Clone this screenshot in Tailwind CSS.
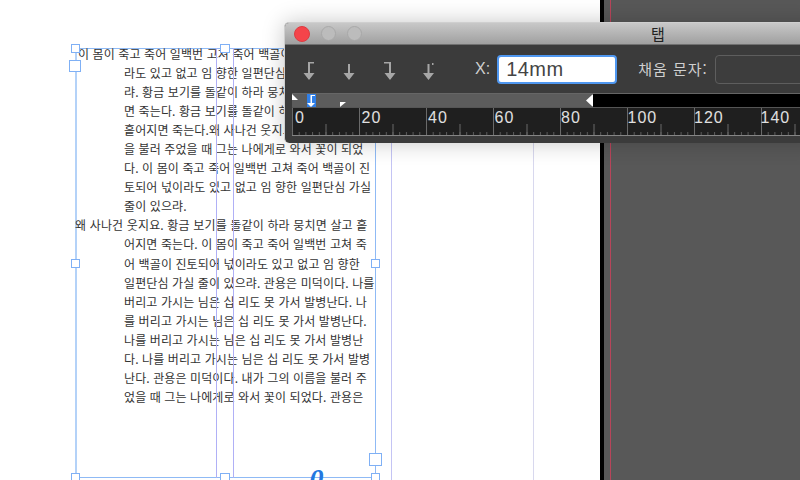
<!DOCTYPE html>
<html lang="ko">
<head>
<meta charset="UTF-8">
<title>탭</title>
<script src="https://cdn.jsdelivr.net/npm/@tailwindcss/browser@4"></script>
</head>
<body class="relative w-[800px] h-[480px] overflow-hidden bg-white [font-family:'Noto_Sans_CJK_KR',sans-serif]">

  <!-- page + pasteboard -->
  <div class="flex w-full h-full">
    <div class="w-[600px] h-full bg-white"></div>
    <div class="w-[4px] h-full bg-black"></div>
    <div class="w-[6px] h-full bg-[#585858]"></div>
    <div class="w-px h-full bg-[#b8455a]"></div>
    <div class="flex-1 h-full bg-[#585858]"></div>
  </div>

  <!-- margin guides -->
  <div class="absolute top-[48px] bottom-0 left-[391px] w-px bg-[#c4c4f4]"></div>
  <div class="absolute top-[48px] bottom-0 left-[533px] w-px bg-[#d8d8ee]"></div>

  <!-- text frame -->
  <div class="absolute left-[75px] top-[48px] w-[301px] h-[430px] border border-l-2 border-[#8fbaf5] border-l-[#b4d2f8]">
    <div class="text-[12px] leading-[19.05px] text-[#333] whitespace-nowrap tracking-[0.1px] -mt-[5px] -ml-[2px]">
      <div class="pl-[3px] w-[300px] overflow-hidden">이 몸이 죽고 죽어 일백번 고쳐 죽어 백골이 진토되어 넋이</div>
      <div class="pl-[49px]">라도 있고 없고 임 향한 일편단심 가실 줄이 있으</div>
      <div class="pl-[49px]">랴. 황금 보기를 돌같이 하라 뭉치면 살고 흩어지</div>
      <div class="pl-[49px]">면 죽는다. 황금 보기를 돌같이 하라 뭉치면 살고</div>
      <div class="pl-[49px]">흩어지면 죽는다.왜 사나건 웃지요. 내가 그의 이름</div>
      <div class="pl-[49px]">을 불러 주었을 때 그는 나에게로 와서 꽃이 되었</div>
      <div class="pl-[49px]">다. 이 몸이 죽고 죽어 일백번 고쳐 죽어 백골이 진</div>
      <div class="pl-[49px]">토되어 넋이라도 있고 없고 임 향한 일편단심 가실</div>
      <div class="pl-[49px]">줄이 있으랴.</div>
      <div class="tracking-[0.15px]">왜 사나건 웃지요. 황금 보기를 돌같이 하라 뭉치면 살고 흩</div>
      <div class="pl-[49px]">어지면 죽는다. 이 몸이 죽고 죽어 일백번 고쳐 죽</div>
      <div class="pl-[49px]">어 백골이 진토되어 넋이라도 있고 없고 임 향한</div>
      <div class="pl-[49px]">일편단심 가실 줄이 있으랴. 관용은 미덕이다. 나를</div>
      <div class="pl-[49px]">버리고 가시는 님은 십 리도 못 가서 발병난다. 나</div>
      <div class="pl-[49px]">를 버리고 가시는 님은 십 리도 못 가서 발병난다.</div>
      <div class="pl-[49px]">나를 버리고 가시는 님은 십 리도 못 가서 발병난</div>
      <div class="pl-[49px]">다. 나를 버리고 가시는 님은 십 리도 못 가서 발병</div>
      <div class="pl-[49px]">난다. 관용은 미덕이다. 내가 그의 이름을 불러 주</div>
      <div class="pl-[49px]">었을 때 그는 나에게로 와서 꽃이 되었다. 관용은</div>
    </div>
  </div>

  <!-- column guides -->
  <div class="absolute top-[48px] left-[216px] w-px h-[430px] bg-[#b0b0f6]"></div>
  <div class="absolute top-[48px] left-[233px] w-px h-[430px] bg-[#b0b0f6]"></div>

  <!-- frame handles -->
  <div class="absolute left-[71px] top-[44px] w-[9px] h-[9px] bg-white border border-[#7fb0f5]"></div>
  <div class="absolute left-[220px] top-[44px] w-[10px] h-[9px] bg-white border border-[#7fb0f5]"></div>
  <div class="absolute left-[69px] top-[60px] w-[12px] h-[12px] bg-white border border-[#7fb0f5]"></div>
  <div class="absolute left-[71px] top-[259px] w-[9px] h-[9px] bg-white border border-[#7fb0f5]"></div>
  <div class="absolute left-[371px] top-[259px] w-[9px] h-[9px] bg-white border border-[#7fb0f5]"></div>
  <div class="absolute left-[369px] top-[453px] w-[13px] h-[13px] bg-white border border-[#7fb0f5]"></div>
  <div class="absolute left-[71px] top-[473px] w-[9px] h-[9px] bg-white border border-[#7fb0f5]"></div>
  <div class="absolute left-[220px] top-[473px] w-[10px] h-[9px] bg-white border border-[#7fb0f5]"></div>
  <div class="absolute left-[371px] top-[473px] w-[9px] h-[9px] bg-white border border-[#7fb0f5]"></div>
  <div class="absolute left-[308px] top-[464px] w-[17px] h-[16px] overflow-hidden text-center text-[#2478e0] text-[28px] leading-[30px] font-bold italic [font-family:'Liberation_Serif',serif]">0</div>

  <!-- tabs panel -->
  <div class="absolute left-[284px] top-[22px] w-[540px] h-[121px] flex flex-col bg-[#3b3b3b] rounded-[5px] border-t border-l border-[#cfcfcf] shadow-[0_0_22px_rgba(0,0,0,0.22)] overflow-hidden">
    <div class="relative h-[22px] shrink-0 flex items-center pl-[9px] gap-[11px] bg-gradient-to-b from-[#c8c8c8] to-[#a0a0a0] border-b border-[#707070]">
      <div class="w-4 h-4 rounded-full bg-[#f5444a] border border-[#dc3c42]"></div>
      <div class="w-[15px] h-[15px] rounded-full bg-[#bcbcbc] border border-[#a8a8a8]"></div>
      <div class="w-[15px] h-[15px] rounded-full bg-[#bcbcbc] border border-[#a8a8a8]"></div>
      <div class="absolute left-[363px] top-0 w-[20px] text-center text-[15px] leading-[22px] text-[#222]">탭</div>
    </div>

    <div class="h-[48px] shrink-0 flex items-center pl-[17px]">
      <div class="flex gap-[26px] mt-1">
        <svg class="w-[14px] h-[20px]" viewBox="0 0 14 20" fill="#a6a6a6"><path d="M6 1h6v1.400H8V12h4.500L7 19 1.500 12H6z"/></svg>
        <svg class="w-[14px] h-[20px]" viewBox="0 0 14 20" fill="#a6a6a6"><path d="M6 3h2v9h4.500L7 19 1.500 12H6z"/></svg>
        <svg class="w-[14px] h-[20px]" viewBox="0 0 14 20" fill="#a6a6a6"><path d="M2 1h7v11h4.500L8 19 2.500 12H7V2.400H2z"/></svg>
        <svg class="w-[14px] h-[20px]" viewBox="0 0 14 20" fill="#a6a6a6"><path d="M5.500 3h2v9H12L6.500 19 1 12h4.500z"/><rect x="10" y="2" width="1.500" height="2"/></svg>
      </div>
      <span class="ml-[39px] text-[16px] text-[#cfcfcf] [font-family:'Liberation_Sans',sans-serif]">X:</span>
      <div class="ml-[7px] w-[120px] h-[29px] flex items-center pl-[7px] bg-white rounded-[4px] border-2 border-[#4f97f0] text-[20px] font-light text-[#444] tracking-[0.5px] [font-family:'Liberation_Sans',sans-serif]">14mm</div>
      <span class="ml-[21px] text-[15px] tracking-[1px] text-[#cfcfcf]">채움 문자:</span>
      <div class="ml-[7px] w-[100px] h-[29px] bg-[#3d3d3d] rounded-[4px] border border-[#5e5e5e]"></div>
    </div>

    <!-- tab strip -->
    <div class="relative h-[14px] shrink-0 ml-[7px] flex border-t border-[#666]">
      <div class="w-[300px] h-full bg-[#5c5c5c]"></div>
      <div class="flex-1 h-full bg-black"></div>
      <div class="absolute left-0 top-0 w-[6px] h-[6px] bg-white [clip-path:polygon(0_0,100%_100%,0_100%)]"></div>
      <div class="absolute left-[15px] top-0 w-[9px] h-[13px] flex justify-center bg-[#2f7fe8]">
        <svg class="w-[9px] h-[13px]" viewBox="0 0 9 13" fill="#fff"><path d="M3.500 1H8v1H5v7h3l-4 4-4-4h3.500z"/></svg>
      </div>
      <div class="absolute left-[48px] top-[8px] w-[6px] h-[5px] bg-white [clip-path:polygon(0_0,100%_0,0_100%)]"></div>
      <div class="absolute left-[294px] top-0 w-[7px] h-[13px] bg-white [clip-path:polygon(100%_0,100%_100%,0_50%)]"></div>
    </div>

    <!-- ruler -->
    <div class="relative h-[29px] shrink-0 ml-[7px] bg-[#1f1f1f] border-y border-t-[#555] border-b-[#858585]">
      <svg class="absolute inset-0 w-full h-full" viewBox="0 0 532 27">
        <defs>
          <pattern id="minor" width="6.700" height="27" patternUnits="userSpaceOnUse">
            <rect x="0" y="24" width="1" height="3" fill="#5c5c5c"/>
          </pattern>
          <pattern id="mid" width="33.500" height="27" patternUnits="userSpaceOnUse">
            <rect x="0" y="16" width="1" height="11" fill="#6a6a6a"/>
          </pattern>
          <pattern id="major" width="67" height="27" patternUnits="userSpaceOnUse">
            <rect x="0" y="0" width="1" height="27" fill="#6a6a6a"/>
          </pattern>
        </defs>
        <rect width="532" height="27" fill="url(#minor)"/>
        <rect width="532" height="27" fill="url(#mid)"/>
        <rect width="532" height="27" fill="url(#major)"/>
      </svg>
      <div class="relative flex pt-px text-[16px] leading-[18px] text-[#e0e0e0] [font-family:'Liberation_Sans',sans-serif] tracking-[1px]">
        <span class="w-[67px] pl-[3px]">0</span>
        <span class="w-[67px] pl-[3px]">20</span>
        <span class="w-[67px] pl-[3px]">40</span>
        <span class="w-[67px] pl-[3px]">60</span>
        <span class="w-[67px] pl-[3px]">80</span>
        <span class="w-[67px] pl-[3px]">100</span>
        <span class="w-[67px] pl-[3px]">120</span>
        <span class="w-[67px] pl-[3px]">140</span>
      </div>
    </div>
  </div>
</body>
</html>
